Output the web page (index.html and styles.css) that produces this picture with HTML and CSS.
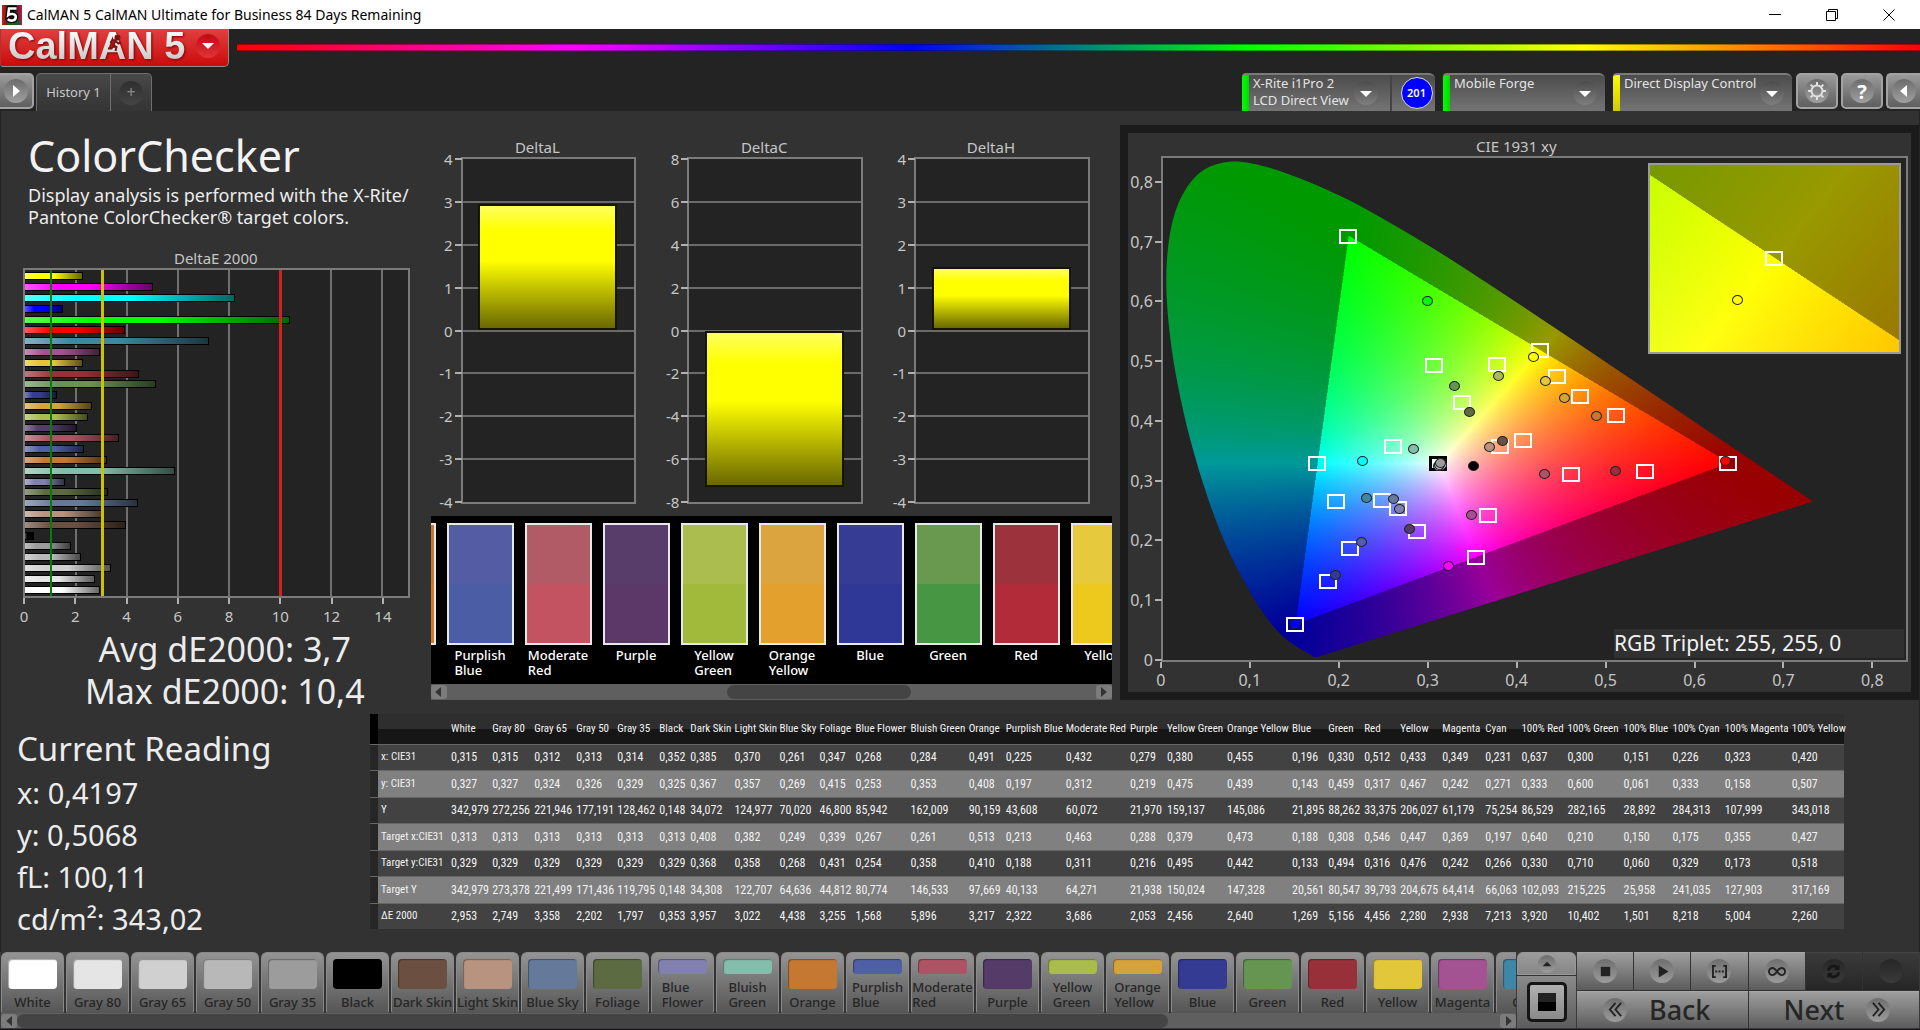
FILE: index.html
```html
<!DOCTYPE html>
<html lang="en">
<head>
<meta charset="utf-8">
<meta name="viewport" content="width=device-width, initial-scale=1">
<title>CalMAN 5 CalMAN Ultimate for Business 84 Days Remaining</title>
<link rel="stylesheet" href="styles.css">
</head>
<body>
<div class="window-bar">
  <svg class="app-icon" viewBox="0 0 20 20" aria-hidden="true">
    <defs>
      <linearGradient id="ai" x1="0" y1="0" x2="1" y2="0"><stop offset="0" stop-color="#d02018"/><stop offset=".5" stop-color="#141414"/><stop offset="1" stop-color="#b0204a"/></linearGradient>
    </defs>
    <rect width="20" height="20" fill="url(#ai)"/>
    <rect x="5" y="15" width="13" height="5" fill="#1c5a28"/>
    <path d="M14.500 3.500H7L6.200 10c2-1.600 7.600-1.500 7.600 2 0 4-5.600 4.500-8 2.200" fill="none" stroke="#000" stroke-width="5"/>
    <path d="M14.500 3.500H7L6.200 10c2-1.600 7.600-1.500 7.600 2 0 4-5.600 4.500-8 2.200" fill="none" stroke="#fff" stroke-width="2.600"/>
  </svg>
  <span class="window-title">CalMAN 5 CalMAN Ultimate for Business 84 Days Remaining</span>
  <button class="win-btn" aria-label="Minimize"><svg viewBox="0 0 12 12"><path d="M0 5.500h12"/></svg></button>
  <button class="win-btn" aria-label="Restore"><svg viewBox="0 0 12 12"><path d="M.5 2.500h9v9h-9zM2.500 2.500v-2h9v9h-2"/></svg></button>
  <button class="win-btn" aria-label="Close"><svg viewBox="0 0 12 12"><path d="M.5.5l11 11M11.500.5l-11 11"/></svg></button>
</div>

<header class="app-header">
  <div class="brand-row">
    <button class="brand">
      <span class="brand-name">CalMAN 5</span>
      <svg class="runner" viewBox="0 0 16 18" aria-hidden="true"><circle cx="11" cy="2.500" r="2" /><path d="M10 5L6.500 10l3.500 2-1 4M7 10l-2 3.500H1.500M10 5L5.500 5.500 4 8M9.500 6.500L12 8.500l2.500-1"/></svg>
      <span class="brand-menu"><svg viewBox="0 0 12 6"><path d="M0 0h12L6 6z"/></svg></span>
    </button>
    <div class="spectrum"></div>
  </div>
  <div class="tab-row">
    <button class="square-btn edge-left" aria-label="Expand"><span class="knob"><svg viewBox="0 0 16 16"><path d="M5 2l7 6-7 6z"/></svg></span></button>
    <div class="history">
      <button class="history-tab">History 1</button>
      <button class="history-add" aria-label="Add history"><span class="knob">+</span></button>
    </div>
    <div class="devices">
      <div class="device device-meter">
        <button class="device-main"><span class="device-name">X-Rite i1Pro 2<br>LCD Direct View</span><span class="knob"><svg viewBox="0 0 16 16"><path d="M2 6h12l-6 6z"/></svg></span></button>
        <button class="badge-cell"><span class="badge">201</span></button>
      </div>
      <div class="device device-source">
        <button class="device-main"><span class="device-name">Mobile Forge</span><span class="knob"><svg viewBox="0 0 16 16"><path d="M2 6h12l-6 6z"/></svg></span></button>
      </div>
      <div class="device device-display">
        <button class="device-main"><span class="device-name">Direct Display Control</span><span class="knob"><svg viewBox="0 0 16 16"><path d="M2 6h12l-6 6z"/></svg></span></button>
      </div>
    </div>
    <div class="tools">
      <button class="square-btn" aria-label="Settings"><span class="knob"><svg class="gear" viewBox="0 0 20 20"><circle cx="10" cy="10" r="5.500"/><path d="M10 1v3M10 16v3M1 10h3M16 10h3M3.600 3.600l2.200 2.200M14.200 14.200l2.200 2.200M16.400 3.600l-2.200 2.200M5.800 14.200l-2.200 2.200"/></svg></span></button>
      <button class="square-btn" aria-label="Help"><span class="knob help">?</span></button>
      <button class="square-btn edge-right" aria-label="Collapse"><span class="knob"><svg viewBox="0 0 16 16"><path d="M11 2L4 8l7 6z"/></svg></span></button>
    </div>
  </div>
</header>

<main class="workspace">
  <div class="charts-row">
    <section class="summary">
      <h1>ColorChecker</h1>
      <p class="intro">Display analysis is performed with the X-Rite/<br>Pantone ColorChecker® target colors.</p>
      <h2 class="chart-title">DeltaE 2000</h2>
      <div class="plot de-plot" id="de-plot"></div>
      <div class="x-axis" id="de-axis"></div>
      <p class="stat">Avg dE2000: 3,7</p>
      <p class="stat">Max dE2000: 10,4</p>
    </section>

    <section class="middle">
      <div class="deltas" id="deltas"></div>
      <div class="swatch-strip"><div class="swatch-track" id="swatches"></div></div>
      <div class="scrollbar strip-scroll">
        <button aria-label="Scroll left"><svg viewBox="0 0 8 12"><path d="M7 0v12L0 6z"/></svg></button>
        <div class="thumb"></div>
        <button aria-label="Scroll right"><svg viewBox="0 0 8 12"><path d="M1 0v12l7-6z"/></svg></button>
      </div>
    </section>

    <section class="cie">
      <h2 class="chart-title">CIE 1931 xy</h2>
      <div class="plot cie-plot" id="cie-plot">
        <canvas id="cie-canvas" width="1490" height="1012"></canvas>
        <div class="inset" id="inset"><canvas id="inset-canvas" width="504" height="380"></canvas></div>
        <div class="triplet">RGB Triplet: 255, 255, 0</div>
      </div>
      <div class="x-axis cie-axis" id="cie-axis"></div>
    </section>
  </div>

  <div class="data-row">
    <section class="reading">
      <h2>Current Reading</h2>
      <p>x: 0,4197</p>
      <p>y: 0,5068</p>
      <p>fL: 100,11</p>
      <p>cd/m²: 343,02</p>
    </section>
    <table class="readings" id="readings"></table>
  </div>
</main>

<footer class="control-bar">
  <div class="patches">
    <div class="patch-list" id="patches"></div>
    <div class="scrollbar patch-scroll">
      <button aria-label="Scroll left"><svg viewBox="0 0 8 12"><path d="M7 0v12L0 6z"/></svg></button>
      <div class="thumb"></div>
      <button aria-label="Scroll right"><svg viewBox="0 0 8 12"><path d="M1 0v12l7-6z"/></svg></button>
    </div>
  </div>
  <div class="pattern">
    <button class="pattern-up" aria-label="Show patterns"><span class="knob"><svg viewBox="0 0 16 16"><path d="M2 11h12L8 5z"/></svg></span></button>
    <button class="pattern-window" aria-label="Window pattern"><span class="pattern-icon"><span></span></span></button>
  </div>
  <div class="transport">
    <button aria-label="Stop"><span class="knob"><svg viewBox="0 0 16 16"><path d="M3 3h10v10H3z"/></svg></span></button>
    <button aria-label="Read"><span class="knob"><svg viewBox="0 0 16 16"><path d="M4 1.500L14.500 8 4 14.500z"/></svg></span></button>
    <button aria-label="Read series"><span class="knob"><svg class="line" viewBox="0 0 16 16"><path d="M4 2H1v12h3M12 2h3v12h-3M3.500 8h2M7 8h2M10.500 8h2"/></svg></span></button>
    <button aria-label="Read continuously"><span class="knob"><svg class="line wide" viewBox="0 0 18 16"><path d="M9 8C7 5 5.500 4.200 4.200 4.200a3.800 3.800 0 0 0 0 7.600C5.500 11.800 7 11 9 8s3.500-3.800 4.800-3.800a3.800 3.800 0 0 1 0 7.600C12.500 11.800 11 11 9 8z"/></svg></span></button>
    <button class="off" aria-label="Refresh" disabled><span class="knob"><svg class="line bold" viewBox="0 0 16 16"><path d="M2.500 7A5.500 5.500 0 0 1 12 4M13.500 9A5.500 5.500 0 0 1 4 12"/><path class="solid" d="M14.500.5v6h-6zM1.500 15.500v-6h6z"/></svg></span></button>
    <button class="off" aria-label="Record" disabled><span class="knob"></span></button>
    <button class="nav"><span class="knob"><svg class="line" viewBox="0 0 16 16"><path d="M8 1L2 8l6 7M14 1L8 8l6 7"/></svg></span>Back</button>
    <button class="nav next">Next<span class="knob"><svg class="line" viewBox="0 0 16 16"><path d="M2 1l6 7-6 7M8 1l6 7-6 7"/></svg></span></button>
  </div>
</footer>
<script src="app.js"></script>
</body>
</html>
```
FILE: styles.css
```css
* { box-sizing: border-box; }
html, body { margin: 0; }
body {
  min-height: 100vh;
  display: flex;
  flex-direction: column;
  background: #323232;
  color: #ececec;
  font-family: "Noto Sans", "Open Sans", sans-serif;
  font-size: 15px;
  line-height: 20px;
}
h1, h2, p { margin: 0; font-weight: 400; }
button { font: inherit; color: inherit; border: 0; padding: 0; background: none; cursor: pointer; }
svg { display: block; fill: currentColor; }

/* window bar */
.window-bar { display: flex; align-items: center; height: 29px; padding: 0 3px 0 2px; background: #fff; color: #000; }
.app-icon { width: 20px; height: 20px; }
.window-title { flex: 1; padding-left: 5px; font-size: 14px; }
.win-btn { width: 57px; height: 29px; display: grid; place-items: center; }
.win-btn svg { width: 12px; height: 12px; fill: none; stroke: #000; }

/* header */
.app-header { background: #232323; color: #e4e4e4; }
.brand-row { display: flex; height: 44px; }
.brand {
  position: relative; display: flex; align-items: center; justify-content: space-between;
  width: 229px; height: 38px; padding: 0 8px 4px 7px;
  background: linear-gradient(#e04040, #cc0a0a); border: 1px solid #8d8d8d; border-top: 0; border-left-color: #a33;
  border-radius: 0 0 5px 3px;
}
.brand-name {
  font: 700 38px/34px "Liberation Sans", Arial, sans-serif; white-space: nowrap;
  background: linear-gradient(#fff, #c4c4c4); background-clip: text; color: transparent;
  filter: drop-shadow(1px 1px 1px #7a0000);
}
.runner { position: absolute; left: 105px; top: 6px; width: 17px; height: 18px; fill: #7c1212; stroke: #7c1212; stroke-width: 2; }
.runner path { fill: none; }
.brand-menu { width: 24px; height: 24px; display: grid; place-items: center; border-radius: 50%; background: linear-gradient(#c00a18, #e03434); color: #fff; }
.brand-menu svg { width: 12px; height: 6px; }
.spectrum {
  flex: 1; height: 7px; margin: 15px 0 0 8px; border: 1px solid rgba(0, 0, 0, .35); border-width: 1px 0;
  background: linear-gradient(90deg, #f00, #f0f, #00f, #0f0, #ff0, #f00);
}
.tab-row { display: flex; height: 38px; font-size: 13px; line-height: 17px; }
.knob {
  width: 24px; height: 24px; display: grid; place-items: center; flex: none; border-radius: 50%;
  background: linear-gradient(#4c4c4c, #7e7e7e); color: #fff;
}
.knob svg { width: 16px; height: 16px; }
.square-btn {
  width: 42px; height: 36px; display: grid; place-items: center;
  background: linear-gradient(#9a9a9a, #5e5e5e); border: 2px solid #a2a2a2; border-radius: 5px;
}
.square-btn .knob { background: linear-gradient(#6c6c6c, #a0a0a0); }
.knob .gear { width: 20px; height: 20px; fill: none; stroke: #e0e0e0; stroke-width: 2; }
.knob.help { font-size: 20px; font-weight: 700; }
.edge-left { width: 34px; border-left: 0; border-radius: 0 5px 5px 0; }
.edge-right { width: 34px; border-right: 0; border-radius: 5px 0 0 5px; }
.history { display: flex; margin-left: 2px; border: 1px solid #6e6e6e; border-bottom: 0; border-radius: 5px 5px 0 0; background: linear-gradient(#484848, #343434); color: #c8c8c8; }
.history-tab { width: 73px; }
.history-add { width: 41px; display: grid; place-items: center; border-left: 1px solid #6e6e6e; }
.history-add .knob { background: linear-gradient(#2e2e2e, #454545); color: #8a8a8a; font-size: 16px; }
.devices { display: flex; gap: 8px; margin-left: auto; }
.device {
  display: flex; border-top: 2px solid #7a7a7a; border-radius: 4px 6px 0 0;
  background: linear-gradient(90deg, #00ff00, #00d800) left / 7px 100% no-repeat, linear-gradient(#4c4c4c, #747474);
}
.device-meter { width: 193px; }
.device-source { width: 162px; }
.device-display { width: 179px; background: linear-gradient(#ff0, #d0c800) left / 7px 100% no-repeat, linear-gradient(#4c4c4c, #747474); }
.device-main { flex: 1; display: flex; justify-content: space-between; align-items: flex-start; padding: 0 8px 0 11px; text-align: left; white-space: nowrap; }
.device-main .knob { margin-top: 6px; }
.device-meter .device-main { padding-right: 12px; }
.badge-cell { width: 45px; padding-left: 6px; border-left: 2px solid #444; display: grid; place-items: center; }
.badge { width: 32px; height: 32px; border: 1px solid #ddd; border-radius: 50%; background: #00f; color: #fff; font-size: 11px; font-weight: 600; line-height: 30px; text-align: center; }
.tools { display: flex; gap: 3px; margin-left: 4px; }

/* workspace */
.workspace { flex: 1; display: flex; flex-direction: column; border: solid #232323; border-width: 0 1px; }
.charts-row { flex: 1; display: grid; grid-template-columns: 430fr 690fr 800fr; min-height: 560px; }
.charts-row > section { min-width: 0; display: flex; flex-direction: column; }
.chart-title { font-size: 15px; line-height: 20px; text-align: center; color: #c6c6c6; }
.plot { position: relative; background: #232323; border: 2px solid #7b7b7b; }
.x-axis { position: relative; height: 30px; color: #c6c6c6; }
.x-axis span { position: absolute; top: 8px; width: 40px; margin-left: -20px; text-align: center; }
.x-axis span::before { content: ""; position: absolute; left: 19px; top: -8px; width: 2px; height: 6px; background: #b0b0b0; }
.vline, .hline, .mark, .circle, .delta-bar, .y-label { position: absolute; }
.vline { top: 0; bottom: 0; width: 2px; margin-left: -1px; background: #707070; }
.hline { left: 0; right: 0; height: 2px; margin-top: -1px; background: #6a6a6a; }
.y-label { right: 100%; height: 20px; margin-top: -10px; padding-right: 10px; white-space: nowrap; color: #c6c6c6; }
.y-label::after { content: ""; position: absolute; right: 1px; top: 9px; width: 7px; height: 2px; background: #b0b0b0; }

/* left column */
.summary { padding-top: 17px; }
.summary h1 { padding-left: 27px; font-size: 43px; line-height: 56px; color: #f2f2f2; }
.intro { padding-left: 27px; font-size: 18px; line-height: 22px; white-space: nowrap; }
.summary .chart-title { margin-top: 20px; }
.de-plot { flex: 1; margin: 0 21px 0 22px; }
.summary .x-axis { margin: 0 22px 0 23px; }
.bars { position: relative; height: 100%; display: grid; grid-auto-rows: 1fr; padding: 1px 0; }
.bar {
  align-self: center; height: 8px; border: 1px solid #000; border-left: 0;
  background-image: linear-gradient(90deg, rgba(255, 255, 255, .35), rgba(255, 255, 255, 0) 25%, rgba(0, 0, 0, 0) 50%, rgba(0, 0, 0, .6));
}
.limit-good { background: #0a7a0a; }
.limit-warn { width: 3px; background: #c8c400; }
.limit-bad { width: 3px; background: #d22020; }
.stat { font-size: 34px; line-height: 42px; text-align: center; padding-left: 18px; }

/* middle column */
.middle { padding-right: 8px; padding-bottom: 12px; }
.deltas { flex: 1; display: grid; grid-template-columns: repeat(3, 1fr); gap: 51px; padding: 26px 22px 0 30px; }
.delta { display: flex; flex-direction: column; min-width: 0; }
.delta .chart-title { margin-right: 22px; }
.delta .plot { flex: 1; }
.delta-bar {
  left: 9%; width: 81%; border: 2px solid #141400;
  background: linear-gradient(#ffff60, #ff0 20%, #ff0 45%, #6a6800);
}
.swatch-strip { height: 168px; margin-top: 12px; padding-top: 7px; overflow: hidden; background: #000; }
.swatch-track { display: flex; gap: 11px; margin-left: -62px; }
.swatch { flex: none; width: 67px; text-align: center; font-size: 13px; font-weight: 500; line-height: 15px; color: #fff; }
.swatch i { display: block; height: 122px; margin-bottom: 3px; border: 2px solid #e8e8e8; }
.swatch span, .patch span { display: inline-block; text-align: left; }
.scrollbar { display: flex; align-items: center; height: 16px; background: #5f5f5f; }
.scrollbar button { width: 16px; height: 14px; display: grid; place-items: center; background: #7c7c7c; border-radius: 3px; color: #333; }
.scrollbar svg { width: 7px; height: 10px; }
.thumb { height: 14px; border-radius: 7px; background: #444; }
.strip-scroll { justify-content: space-between; }
.strip-scroll .thumb { width: 27%; margin-left: 14%; }

/* chromaticity diagram */
.cie { margin: 14px 0 12px; border: 8px solid #1b1b1b; padding: 3px 3px 0 33px; }
.cie .chart-title { margin-left: -36px; }
.cie-plot { flex: 1; }
.cie-plot > canvas, .inset canvas { position: absolute; left: 0; top: 0; width: 100%; height: 100%; }
.cie .y-label, .cie-axis { font-size: 16px; }
.mark { width: 18px; height: 15px; margin: -7px 0 0 -10px; border: 2px solid #fff; }
.mark.white-point { border: 3px solid #000; }
.circle { width: 11px; height: 10px; margin: -5px 0 0 -6px; border: 1px solid #222; border-radius: 50%; }
.inset { position: absolute; right: 5px; top: 1%; width: 34%; height: 38%; border: 2px solid #9a9a9a; }
.triplet { position: absolute; right: 2px; bottom: 2px; width: 290px; height: 29px; background: #303030; font-size: 21px; line-height: 29px; color: #f2f2f2; }

/* readings */
.data-row { display: flex; align-items: flex-start; padding: 2px 75px 12px 0; }
.reading { width: 369px; padding: 12px 0 0 16px; font-size: 29px; line-height: 42px; }
.reading h2 { font-size: 33px; line-height: 46px; }
.readings {
  flex: 1; width: 100%; border-collapse: collapse; table-layout: fixed;
  font: 12px/16px "Roboto Condensed", Roboto, sans-serif; color: #f2f2f2; white-space: nowrap;
}
.readings th, .readings td { padding: 0 0 0 3px; font-weight: 400; text-align: left; }
.readings th { font-size: 11px; }
.readings thead tr { height: 30px; background: linear-gradient(#2e2e2e 50%, #161616 50%); }
.readings tbody tr { height: 26px; background: #424242; border-top: 1px solid #666; }
.readings tbody tr:nth-child(even) { height: 27px; background: #808080; }
.readings .stub { background: #262626; }
.readings thead .stub { background: #000; }

/* control bar */
.control-bar { display: flex; height: 78px; padding: 0 1px 1px; background: #3a3a3a; border-bottom: 1px solid #1a1216; color: #262626; }
.patches { flex: 1; min-width: 0; display: flex; flex-direction: column; }
.patch-list { flex: 1; display: flex; gap: 2px; overflow: hidden; background: #333; }
.patch {
  flex: none; width: 63px; display: flex; flex-direction: column; align-items: center; padding-top: 6px;
  border: 1px solid #8a8a8a; border-bottom: 0; border-radius: 6px 6px 2px 2px; background: linear-gradient(#949494, #555);
  font-size: 13px; font-weight: 500; line-height: 15px; white-space: nowrap;
}
.patch i { flex: 1; width: 49px; border-radius: 4px; box-shadow: inset 1px 1px 1px rgba(0, 0, 0, .35); margin-bottom: 6px; }
.patch span { margin-bottom: 3px; }
.patch-scroll { height: 15px; }
.patch-scroll .thumb { width: 76%; margin-right: auto; }
.pattern { width: 61px; display: flex; flex-direction: column; padding: 0 1px; }
.pattern-up { height: 23px; display: grid; place-items: center; border: 1px solid #999; border-radius: 6px 6px 0 0; background: linear-gradient(#9c9c9c, #868686); }
.pattern-window { flex: 1; display: grid; place-items: center; border-top: 1px solid #333; background: linear-gradient(#8a8a8a, #5c5c5c); }
.pattern .knob, .transport .knob { background: linear-gradient(#6e6e6e, #9c9c9c); color: #222; }
.pattern .knob { width: 18px; height: 18px; }
.pattern .knob svg { width: 12px; height: 12px; }
.pattern-icon { width: 40px; height: 40px; display: grid; place-items: center; border: 3px solid #151515; border-radius: 5px; background: linear-gradient(#b0b0b0, #8a8a8a); }
.pattern-icon span { width: 18px; height: 18px; background: linear-gradient(#222 50%, #000 50%); }
.transport { width: 342px; display: grid; grid-template-columns: repeat(6, 1fr); grid-template-rows: 1fr 1fr; gap: 1px; background: #333; }
.transport button { display: grid; place-items: center; background: linear-gradient(#9e9e9e, #5c5c5c); border-top: 1px solid #a8a8a8; }
.transport .off { background: linear-gradient(#3a3a3a, #262626); border-top-color: #444; }
.transport .off .knob { background: linear-gradient(#262626, #3a3a3a); color: #161616; }
.transport svg { width: 15px; height: 15px; }
.transport .wide { width: 20px; }
.transport .line { fill: none; stroke: currentColor; stroke-width: 2; }
.transport .bold { stroke-width: 3; }
.transport .solid { fill: currentColor; stroke: none; }
.transport .nav { grid-column: span 3; display: flex; align-items: center; gap: 22px; padding-left: 26px; font-size: 27px; font-weight: 500; line-height: 34px; }
.transport .next { padding-left: 35px; }
```
FILE: app.js
```js
const COLORS = [
  // name, swatch colour, x, y, Y, target x, target y, target Y, dE 2000, column width
  ['White', '#ffffff', '0,315', '0,327', '342,979', '0,313', '0,329', '342,979', '2,953', 41],
  ['Gray 80', '#e5e5e5', '0,315', '0,327', '272,256', '0,313', '0,329', '273,378', '2,749', 42],
  ['Gray 65', '#d0d0d0', '0,312', '0,324', '221,946', '0,313', '0,329', '221,499', '3,358', 42],
  ['Gray 50', '#b8b8b8', '0,313', '0,326', '177,191', '0,313', '0,329', '171,436', '2,202', 41],
  ['Gray 35', '#9c9c9c', '0,314', '0,329', '128,462', '0,313', '0,329', '119,795', '1,797', 42],
  ['Black', '#000000', '0,352', '0,325', '0,148', '0,313', '0,329', '0,148', '0,353', 31],
  ['Dark Skin', '#6b4f40', '0,385', '0,367', '34,072', '0,408', '0,368', '34,308', '3,957', 44],
  ['Light Skin', '#b8937f', '0,370', '0,357', '124,977', '0,382', '0,358', '122,707', '3,022', 45],
  ['Blue Sky', '#657a9b', '0,261', '0,269', '70,020', '0,249', '0,268', '64,636', '4,438', 40],
  ['Foliage', '#5c6b41', '0,347', '0,415', '46,800', '0,339', '0,431', '44,812', '3,255', 36],
  ['Blue Flower', '#8280ae', '0,268', '0,253', '85,942', '0,267', '0,254', '80,774', '1,568', 55],
  ['Bluish Green', '#84bdab', '0,284', '0,353', '162,009', '0,261', '0,358', '146,533', '5,896', 58],
  ['Orange', '#c47832', '0,491', '0,408', '90,159', '0,513', '0,410', '97,669', '3,217', 37],
  ['Purplish Blue', '#4f5fa5', '0,225', '0,197', '43,608', '0,213', '0,188', '40,133', '2,322', 60],
  ['Moderate Red', '#ae5364', '0,432', '0,312', '60,072', '0,463', '0,311', '64,271', '3,686', 64],
  ['Purple', '#543b68', '0,279', '0,219', '21,970', '0,288', '0,216', '21,938', '2,053', 37],
  ['Yellow Green', '#a9bc4c', '0,380', '0,475', '159,137', '0,379', '0,495', '150,024', '2,456', 60],
  ['Orange Yellow', '#d6a23b', '0,455', '0,439', '145,086', '0,473', '0,442', '147,328', '2,640', 65],
  ['Blue', '#343b93', '0,196', '0,143', '21,895', '0,188', '0,133', '20,561', '1,269', 36],
  ['Green', '#659550', '0,330', '0,459', '88,262', '0,308', '0,494', '80,547', '5,156', 36],
  ['Red', '#983039', '0,512', '0,317', '33,375', '0,546', '0,316', '39,793', '4,456', 36],
  ['Yellow', '#e3c73a', '0,433', '0,467', '206,027', '0,447', '0,476', '204,675', '2,280', 42],
  ['Magenta', '#a35391', '0,349', '0,242', '61,179', '0,369', '0,242', '64,414', '2,938', 43],
  ['Cyan', '#3f87a6', '0,231', '0,271', '75,254', '0,197', '0,266', '66,063', '7,213', 36],
  ['100% Red', '#ff0000', '0,637', '0,333', '86,529', '0,640', '0,330', '102,093', '3,920', 46],
  ['100% Green', '#00ff00', '0,300', '0,600', '282,165', '0,210', '0,710', '215,225', '10,402', 56],
  ['100% Blue', '#0000ff', '0,151', '0,061', '28,892', '0,150', '0,060', '25,958', '1,501', 49],
  ['100% Cyan', '#00ffff', '0,226', '0,333', '284,313', '0,175', '0,329', '241,035', '8,218', 52],
  ['100% Magenta', '#ff00ff', '0,323', '0,158', '107,999', '0,355', '0,173', '127,903', '5,004', 67],
  ['100% Yellow', '#ffff00', '0,420', '0,507', '343,018', '0,427', '0,518', '317,169', '2,260', 55]
];
const num = s => parseFloat(s.replace(',', '.'));
const byId = id => document.getElementById(id);

function add(parent, tag, cls, style, text) {
  const el = document.createElement(tag);
  if (cls) el.className = cls;
  if (style) Object.assign(el.style, style);
  if (text !== undefined) el.textContent = text;
  parent.append(el);
  return el;
}

// DeltaE 2000 bars, last patch on top
const dePlot = byId('de-plot');
for (let v = 2; v < 15; v += 2) add(dePlot, 'div', 'vline', { left: v / 15 * 100 + '%' });
for (let v = 0; v < 15; v += 2) add(byId('de-axis'), 'span', '', { left: v / 15 * 100 + '%' }, v);
const bars = add(dePlot, 'div', 'bars');
[...COLORS].reverse().forEach(c => add(bars, 'div', 'bar', { width: num(c[8]) / 15 * 100 + '%', backgroundColor: c[1] }));
add(dePlot, 'div', 'vline limit-good', { left: 100 / 15 + '%' });
add(dePlot, 'div', 'vline limit-warn', { left: '20%' });
add(dePlot, 'div', 'vline limit-bad', { left: 1000 / 15 + '%' });

// DeltaL / DeltaC / DeltaH
[['DeltaL', 4, 2.95], ['DeltaC', 8, -7.3], ['DeltaH', 4, 1.47]].forEach(([name, max, value]) => {
  const fig = add(byId('deltas'), 'div', 'delta');
  add(fig, 'h2', 'chart-title', null, name);
  const plot = add(fig, 'div', 'plot');
  for (let i = 0; i <= 8; i++) {
    const top = i * 12.5 + '%';
    if (i > 0 && i < 8) add(plot, 'div', 'hline', { top });
    add(plot, 'span', 'y-label', { top }, max - i * max / 4);
  }
  const size = Math.abs(value) / max * 50;
  add(plot, 'div', 'delta-bar', { top: (value > 0 ? 50 - size : 50) + '%', height: size + '%' });
});

// measured / target swatches
const lines = (el, name) => {
  const words = name.split(' ');
  el.append(words[0]);
  if (words[1]) el.append(document.createElement('br'), words[1]);
};
[['Orange', '#c47832', '#d07a28'], ['Purplish Blue', '#545da3', '#4a5da5'], ['Moderate Red', '#b15b66', '#c35361'],
 ['Purple', '#583c6a', '#5c3869'], ['Yellow Green', '#abbd4f', '#a1ba3c'], ['Orange Yellow', '#dca43e', '#e4a02c'],
 ['Blue', '#363c93', '#2f3896'], ['Green', '#69984f', '#479644'], ['Red', '#9c323b', '#b22b38'],
 ['Yellow', '#e7c93e', '#edc81d']].forEach(([name, a, b]) => {
  const cell = add(byId('swatches'), 'div', 'swatch');
  add(cell, 'i', '', { background: `linear-gradient(${a} 50%, ${b} 50%)` });
  lines(add(cell, 'span'), name);
});

// readings table
const table = byId('readings');
const total = COLORS.reduce((s, c) => s + c[9], 8 + 70);
const cols = add(table, 'colgroup');
[8, 70, ...COLORS.map(c => c[9])].forEach(w => add(cols, 'col', '', { width: w / total * 100 + '%' }));
const head = add(add(table, 'thead'), 'tr');
add(head, 'td', 'stub');
add(head, 'td');
COLORS.forEach(c => { add(head, 'th', '', null, c[0]).scope = 'col'; });
const body = add(table, 'tbody');
['x: CIE31', 'y: CIE31', 'Y', 'Target x:CIE31', 'Target y:CIE31', 'Target Y', 'ΔE 2000'].forEach((label, i) => {
  const row = add(body, 'tr');
  add(row, 'td', 'stub');
  add(row, 'th', '', null, label).scope = 'row';
  COLORS.forEach(c => add(row, 'td', '', null, c[i + 2]));
});

// patch buttons
COLORS.slice(0, 24).forEach(c => {
  const btn = add(byId('patches'), 'button', 'patch');
  add(btn, 'i', '', { background: c[1] });
  const label = add(btn, 'span');
  if (/Skin|Gray|Sky/.test(c[0])) label.textContent = c[0];
  else lines(label, c[0]);
});

// chromaticity diagram
const LOCUS = [[.1741, .005], [.1714, .0051], [.1689, .0069], [.1644, .0109], [.1566, .0177], [.151, .0227], [.144, .0297],
  [.1355, .0399], [.1241, .0578], [.1096, .0868], [.0913, .1327], [.0687, .2007], [.0454, .295], [.0235, .4127],
  [.0082, .5384], [.0039, .6548], [.0139, .7502], [.0389, .812], [.0743, .8338], [.1142, .8262], [.1547, .8059],
  [.1929, .7816], [.2296, .7543], [.3016, .6923], [.3731, .6245], [.4441, .5547], [.5125, .4866], [.5752, .4242],
  [.627, .3725], [.6658, .334], [.6915, .3083], [.719, .2809], [.7347, .2653]];
const R = [.64, .33], G = [.21, .71], B = [.15, .06], W = [.3127, .329];

// share of each primary at a chromaticity point
function shares(x, y) {
  const a = R[0] - B[0], b = G[0] - B[0], c = R[1] - B[1], d = G[1] - B[1];
  const det = a * d - b * c, px = x - B[0], py = y - B[1];
  const r = (px * d - b * py) / det, g = (a * py - c * px) / det;
  return [r, g, 1 - r - g];
}
const white = shares(...W);

function fillGamut(canvas, x0, x1, y0, y1) {
  const w = canvas.width, h = canvas.height, ctx = canvas.getContext('2d');
  const img = ctx.createImageData(w, h);
  for (let j = 0, k = 0; j < h; j++) {
    const y = y1 - (j + .5) / h * (y1 - y0);
    for (let i = 0; i < w; i++, k += 4) {
      const s = shares(x0 + (i + .5) / w * (x1 - x0), y);
      const dim = Math.min(...s) < 0 ? 153 : 255;
      const rgb = s.map((v, n) => Math.max(0, v / white[n]));
      const max = Math.max(...rgb);
      img.data[k] = rgb[0] / max * dim;
      img.data[k + 1] = rgb[1] / max * dim;
      img.data[k + 2] = rgb[2] / max * dim;
      img.data[k + 3] = 255;
    }
  }
  ctx.putImageData(img, 0, 0);
  return ctx;
}

const MAX = .84;
const canvas = byId('cie-canvas');
const ctx = fillGamut(canvas, 0, MAX, 0, MAX);
const P = LOCUS.map(([x, y]) => [x / MAX * canvas.width, (1 - y / MAX) * canvas.height]);
ctx.globalCompositeOperation = 'destination-in';
ctx.beginPath();
ctx.moveTo(...P[0]);
for (let i = 0; i < P.length - 1; i++) {
  const p0 = P[Math.max(i - 1, 0)], p1 = P[i], p2 = P[i + 1], p3 = P[Math.min(i + 2, P.length - 1)];
  ctx.bezierCurveTo(p1[0] + (p2[0] - p0[0]) / 6, p1[1] + (p2[1] - p0[1]) / 6,
    p2[0] - (p3[0] - p1[0]) / 6, p2[1] - (p3[1] - p1[1]) / 6, p2[0], p2[1]);
}
ctx.closePath();
ctx.fill();

const ciePlot = byId('cie-plot');
const at = (x, y) => ({ left: x / MAX * 100 + '%', top: (1 - y / MAX) * 100 + '%' });
for (let i = 0; i <= 8; i++) {
  const label = i ? '0,' + i : '0';
  add(ciePlot, 'span', 'y-label', { top: at(0, i / 10).top }, label);
  add(byId('cie-axis'), 'span', '', { left: at(i / 10, 0).left }, label);
}
COLORS.slice(6).forEach(c => add(ciePlot, 'div', 'mark', at(num(c[5]), num(c[6]))));
add(ciePlot, 'div', 'mark white-point', at(...W));
COLORS.forEach(c => add(ciePlot, 'div', 'circle', { ...at(num(c[2]), num(c[3])), background: c[1] }));

// close-up around the selected target
const inset = byId('inset'), cx = .427, cy = .518, half = .025;
fillGamut(byId('inset-canvas'), cx - half, cx + half, cy - half, cy + half);
add(inset, 'div', 'mark', { left: '50%', top: '50%' });
add(inset, 'div', 'circle', { left: (.4197 - cx + half) / half * 50 + '%', top: (cy + half - .5068) / half * 50 + '%', background: '#ffff00' });
```
